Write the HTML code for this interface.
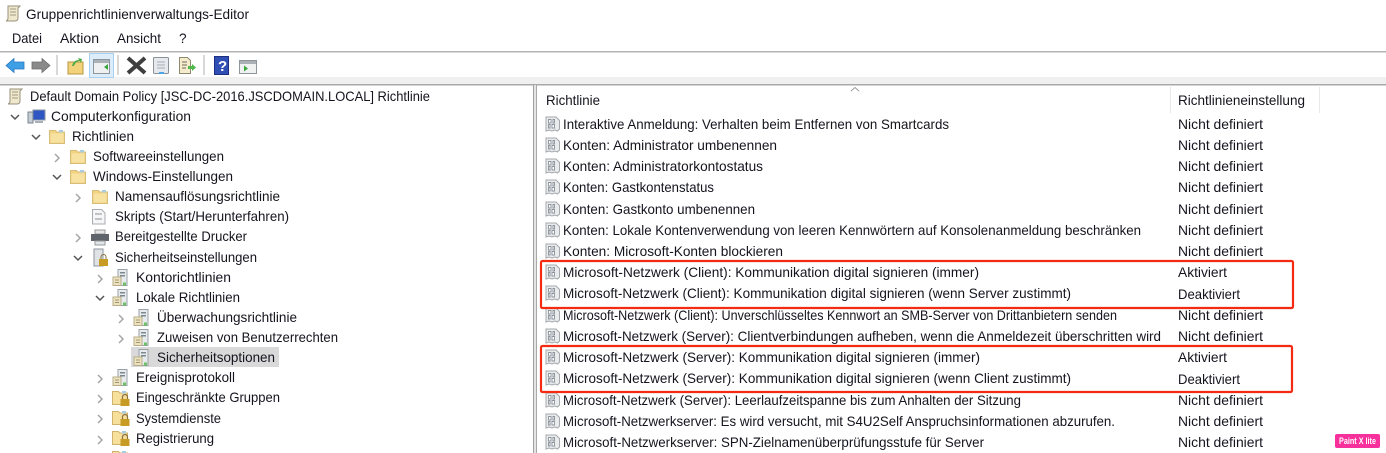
<!DOCTYPE html>
<html><head><meta charset="utf-8"><style>
html,body{margin:0;padding:0;background:#fff;width:1386px;height:453px;overflow:hidden}
svg{display:block;filter:blur(.3px)}
text{font-family:"Liberation Sans",sans-serif;font-size:13.6px;fill:#14141e}
</style></head><body>
<svg width="1386" height="453" viewBox="0 0 1386 453" xmlns="http://www.w3.org/2000/svg">
<defs>
<symbol id="folder" viewBox="0 0 16 16"><path d="M.5 14.500V1.500h6l1.200 1.500h7.800v11.500z" fill="#f1d382" stroke="#d8bd78"/><path d="M1.500 4.500h13v9h-13z" fill="#f8e2a2"/><rect x="10" y="1" width="4" height="2.500" fill="#a8cce0"/></symbol>
<symbol id="lockf" viewBox="0 0 18 16"><path d="M.5 14.500V1.500h6l1.200 1.500h7.800v11.500z" fill="#f6e09c" stroke="#d0b46c"/><rect x="10" y="1" width="4" height="2.500" fill="#a8cce0"/><rect x="8.500" y="9" width="9" height="7" fill="#c89b24"/><path d="M10.500 9V7a2.500 2.500 0 015 0v2" fill="none" stroke="#8a7040" stroke-width="1.200"/></symbol>
<symbol id="srv" viewBox="0 0 16 18"><rect x="6" y=".5" width="9" height="16" fill="#e8ebed" stroke="#9aa2a8"/><rect x="8" y="3" width="5" height="1.500" fill="#7c888f"/><rect x="8" y="6" width="5" height="1.500" fill="#7c888f"/><rect x="11" y="13.500" width="3" height="3" fill="#6cc066"/><path d="M1 8h8v8.500H1z" fill="#ece2c0" stroke="#b8ad88"/><path d="M3 11h4M3 13.500h4" stroke="#a49870"/></symbol>
<symbol id="pol" viewBox="0 0 16 16"><path d="M1 1h10l3.500 3.500v8.500l-2 2-2.500-1-3 1-3-1-3 1z" fill="#e9ebed" stroke="#a4a8ac"/><path d="M3.500 3.500h2.500v3.500H3.500zM8 3.500h1.500v3.500H8zM3.500 8.500H5V12H3.500zM7 8.500h2.500V12H7z" fill="#fff" stroke="#8a929a" stroke-width=".9"/></symbol>
<symbol id="scroll" viewBox="0 0 18 18"><path d="M4 2h12l-2 2v10c0 2-1 3-3 3H2c1.500-.5 2-1.500 2-3z" fill="#f0e8cc" stroke="#98927e"/><path d="M6 5h6M6 8h6M6 11h6" stroke="#a09a84"/></symbol>
<symbol id="cd" viewBox="0 0 10 10"><path d="M1 3l4 4 4-4" fill="none" stroke="#555" stroke-width="1.500"/></symbol>
<symbol id="cr" viewBox="0 0 10 10"><path d="M3 1l4 4-4 4" fill="none" stroke="#a6a6a6" stroke-width="1.500"/></symbol>
</defs>

<rect width="1386" height="453" fill="#fff"/>

<!-- title + menu -->
<use href="#scroll" x="4" y="4" width="18" height="18"/>
<text x="26" y="19" textLength="223" lengthAdjust="spacingAndGlyphs">Gruppenrichtlinienverwaltungs-Editor</text>
<text x="12" y="43" textLength="30" lengthAdjust="spacingAndGlyphs">Datei</text>
<text x="60" y="43" textLength="39" lengthAdjust="spacingAndGlyphs">Aktion</text>
<text x="117" y="43" textLength="44" lengthAdjust="spacingAndGlyphs">Ansicht</text>
<text x="179" y="43">?</text>

<!-- toolbar -->
<rect x="0" y="51" width="1386" height="1.500" fill="#b4b4b4"/>
<rect x="0" y="77" width="1386" height="7" fill="#f0f0f0"/>
<rect x="0" y="84" width="1386" height="1.500" fill="#a8a8a8"/>
<path d="M6 65.500l8-7v3.500h10v7H14v3.500z" fill="#3f9fe6" stroke="#2a78c0" stroke-width=".8"/>
<path d="M50 65.500l-8-7v3.500H32v7h10v3.500z" fill="#8a8a8a" stroke="#6e6e6e" stroke-width=".8"/>
<rect x="56.500" y="55" width="1" height="20" fill="#b0b0b0"/>
<path d="M68 62h15v12H68z" fill="#f3d27c" stroke="#b8973c"/>
<path d="M72 66c1-4 3-6 7-6l-1-2 4 1-1 4-1-2c-3 0-5 2-6 5z" fill="#4eac48"/>
<rect x="89.500" y="53.500" width="24" height="24" fill="#dcecf9" stroke="#a8d0f0"/>
<rect x="93.500" y="59.500" width="16" height="14" fill="#eef0f2" stroke="#8c969c"/>
<rect x="94" y="60" width="15" height="3" fill="#aab2b8"/>
<path d="M108 64l-4 3 4 3z" fill="#3aa63e"/>
<rect x="117.500" y="55" width="1" height="20" fill="#b0b0b0"/>
<path d="M128 58l17 15M145 58l-17 15" stroke="#3f3f3f" stroke-width="4"/>
<rect x="153.500" y="57.500" width="15" height="16" rx="1" fill="#e6eaee" stroke="#8c9298"/>
<path d="M157 62h8M157 65h8M157 68h8" stroke="#a4acb2"/>
<rect x="159" y="72" width="5" height="2" fill="#4aa6e6"/>
<path d="M179.500 57.500h8l3 3v13h-11z" fill="#f4eccc" stroke="#8e8a70"/>
<path d="M182 62h5M182 65h5M182 68h4" stroke="#6e6a58"/>
<path d="M188 66h4v-2l4 3.500-4 3.500v-2h-4z" fill="#4eb848"/>
<rect x="203.500" y="55" width="1" height="20" fill="#b0b0b0"/>
<rect x="214.500" y="56.500" width="14" height="18" fill="#2f4fb4" stroke="#1c2f80"/>
<text x="218" y="71" style="font-size:15px;font-weight:bold;fill:#fff">?</text>
<rect x="239.500" y="60.500" width="17" height="13" fill="#f0f2f2" stroke="#8c969c"/>
<rect x="240" y="61" width="16" height="3" fill="#aab2b8"/>
<path d="M244 65.500l4 3-4 3z" fill="#3aa63e"/>

<!-- panes -->
<rect x="533" y="85" width="3.500" height="368" fill="#e4e4e4"/>
<rect x="533" y="85" width="1" height="368" fill="#a0a0a0"/>
<rect x="536" y="85" width="1" height="368" fill="#a8a8a8"/>

<!-- tree -->
<rect x="131" y="347" width="148" height="20" fill="#d9d9d9"/>
<use href="#scroll" x="6" y="87" width="18" height="18"/>
<text x="30" y="101" textLength="400" lengthAdjust="spacingAndGlyphs">Default Domain Policy [JSC-DC-2016.JSCDOMAIN.LOCAL] Richtlinie</text>
<use href="#cd" x="10" y="112" width="10" height="10"/>
<rect x="33" y="110" width="12" height="10" fill="#2f57c4" stroke="#8a94a0"/><rect x="28" y="112" width="5" height="11" fill="#c4ccd4" stroke="#7a8490"/><rect x="35" y="121" width="8" height="2" fill="#a8b0b8"/>
<text x="51" y="121" textLength="140" lengthAdjust="spacingAndGlyphs">Computerkonfiguration</text>
<use href="#cd" x="31" y="132" width="10" height="10"/>
<use href="#folder" x="49" y="129" width="16" height="16"/>
<text x="72" y="141" textLength="62" lengthAdjust="spacingAndGlyphs">Richtlinien</text>
<use href="#cr" x="52" y="153" width="10" height="10"/>
<use href="#folder" x="70" y="149" width="16" height="16"/>
<text x="93" y="161" textLength="131" lengthAdjust="spacingAndGlyphs">Softwareeinstellungen</text>
<use href="#cd" x="52" y="172" width="10" height="10"/>
<use href="#folder" x="70" y="169" width="16" height="16"/>
<text x="93" y="181" textLength="140" lengthAdjust="spacingAndGlyphs">Windows-Einstellungen</text>
<use href="#cr" x="73" y="193" width="10" height="10"/>
<use href="#folder" x="92" y="189" width="16" height="16"/>
<text x="115" y="201" textLength="165" lengthAdjust="spacingAndGlyphs">Namensauflösungsrichtlinie</text>
<path d="M92.500 209.500h9l3.500 3.500v11H92.500z" fill="#f6f6f8" stroke="#a8acb0"/><path d="M95 214h7M95 219h7" stroke="#8a9098"/>
<text x="115" y="221" textLength="174" lengthAdjust="spacingAndGlyphs">Skripts (Start/Herunterfahren)</text>
<use href="#cr" x="73" y="233" width="10" height="10"/>
<rect x="95" y="230" width="10" height="4" fill="#e4e4e4" stroke="#9a9a9a"/><rect x="91" y="234" width="18" height="7" fill="#5e646a"/><rect x="95" y="241" width="10" height="4" fill="#dfe6ea" stroke="#9a9a9a"/>
<text x="115" y="241" textLength="132" lengthAdjust="spacingAndGlyphs">Bereitgestellte Drucker</text>
<use href="#cd" x="73" y="253" width="10" height="10"/>
<rect x="94" y="249" width="9" height="17" fill="#dfe3e6" stroke="#8c969c"/><rect x="99" y="259" width="9" height="7" fill="#c89b24"/><path d="M101 259v-2a2.500 2.500 0 015 0v2" fill="none" stroke="#8a7040"/>
<text x="115" y="262" textLength="142" lengthAdjust="spacingAndGlyphs">Sicherheitseinstellungen</text>
<use href="#cr" x="95" y="274" width="10" height="10"/>
<use href="#srv" x="112" y="269" width="16" height="18"/>
<text x="136" y="282" textLength="95" lengthAdjust="spacingAndGlyphs">Kontorichtlinien</text>
<use href="#cd" x="95" y="293" width="10" height="10"/>
<use href="#srv" x="112" y="289" width="16" height="18"/>
<text x="136" y="302" textLength="104" lengthAdjust="spacingAndGlyphs">Lokale Richtlinien</text>
<use href="#cr" x="116" y="314" width="10" height="10"/>
<use href="#srv" x="133" y="309" width="16" height="18"/>
<text x="157" y="322" textLength="140" lengthAdjust="spacingAndGlyphs">Überwachungsrichtlinie</text>
<use href="#cr" x="116" y="334" width="10" height="10"/>
<use href="#srv" x="133" y="329" width="16" height="18"/>
<text x="157" y="342" textLength="181" lengthAdjust="spacingAndGlyphs">Zuweisen von Benutzerrechten</text>
<use href="#srv" x="133" y="349" width="16" height="18"/>
<text x="157" y="362" textLength="118" lengthAdjust="spacingAndGlyphs">Sicherheitsoptionen</text>
<use href="#cr" x="95" y="374" width="10" height="10"/>
<use href="#srv" x="112" y="369" width="16" height="18"/>
<text x="136" y="382" textLength="99" lengthAdjust="spacingAndGlyphs">Ereignisprotokoll</text>
<use href="#cr" x="95" y="394" width="10" height="10"/>
<use href="#lockf" x="112" y="390" width="18" height="16"/>
<text x="136" y="402" textLength="144" lengthAdjust="spacingAndGlyphs">Eingeschränkte Gruppen</text>
<use href="#cr" x="95" y="414" width="10" height="10"/>
<use href="#lockf" x="112" y="410" width="18" height="16"/>
<text x="136" y="423" textLength="85" lengthAdjust="spacingAndGlyphs">Systemdienste</text>
<use href="#cr" x="95" y="435" width="10" height="10"/>
<use href="#lockf" x="112" y="430" width="18" height="16"/>
<text x="136" y="443" textLength="78" lengthAdjust="spacingAndGlyphs">Registrierung</text>
<use href="#lockf" x="112" y="450" width="18" height="16"/>

<!-- list header -->
<text x="546" y="105" textLength="54" lengthAdjust="spacingAndGlyphs">Richtlinie</text>
<path d="M851 91l4-3.500 4 3.500" fill="none" stroke="#9a9a9a"/>
<rect x="1170" y="87" width="1" height="26" fill="#e8e8e8"/>
<rect x="1319" y="87" width="1" height="26" fill="#e8e8e8"/>
<text x="1178" y="105" textLength="127" lengthAdjust="spacingAndGlyphs">Richtlinieneinstellung</text>

<!-- rows -->
<use href="#pol" x="545" y="116" width="16" height="16"/>
<text x="563" y="129" textLength="386" lengthAdjust="spacingAndGlyphs">Interaktive Anmeldung: Verhalten beim Entfernen von Smartcards</text>
<text x="1178" y="129" textLength="85" lengthAdjust="spacingAndGlyphs">Nicht definiert</text>
<use href="#pol" x="545" y="137" width="16" height="16"/>
<text x="563" y="150" textLength="214" lengthAdjust="spacingAndGlyphs">Konten: Administrator umbenennen</text>
<text x="1178" y="150" textLength="85" lengthAdjust="spacingAndGlyphs">Nicht definiert</text>
<use href="#pol" x="545" y="158" width="16" height="16"/>
<text x="563" y="171" textLength="200" lengthAdjust="spacingAndGlyphs">Konten: Administratorkontostatus</text>
<text x="1178" y="171" textLength="85" lengthAdjust="spacingAndGlyphs">Nicht definiert</text>
<use href="#pol" x="545" y="179" width="16" height="16"/>
<text x="563" y="192" textLength="151" lengthAdjust="spacingAndGlyphs">Konten: Gastkontenstatus</text>
<text x="1178" y="192" textLength="85" lengthAdjust="spacingAndGlyphs">Nicht definiert</text>
<use href="#pol" x="545" y="201" width="16" height="16"/>
<text x="563" y="214" textLength="192" lengthAdjust="spacingAndGlyphs">Konten: Gastkonto umbenennen</text>
<text x="1178" y="214" textLength="85" lengthAdjust="spacingAndGlyphs">Nicht definiert</text>
<use href="#pol" x="545" y="222" width="16" height="16"/>
<text x="563" y="235" textLength="578" lengthAdjust="spacingAndGlyphs">Konten: Lokale Kontenverwendung von leeren Kennwörtern auf Konsolenanmeldung beschränken</text>
<text x="1178" y="235" textLength="85" lengthAdjust="spacingAndGlyphs">Nicht definiert</text>
<use href="#pol" x="545" y="243" width="16" height="16"/>
<text x="563" y="256" textLength="220" lengthAdjust="spacingAndGlyphs">Konten: Microsoft-Konten blockieren</text>
<text x="1178" y="256" textLength="85" lengthAdjust="spacingAndGlyphs">Nicht definiert</text>
<use href="#pol" x="545" y="264" width="16" height="16"/>
<text x="563" y="277" textLength="416" lengthAdjust="spacingAndGlyphs">Microsoft-Netzwerk (Client): Kommunikation digital signieren (immer)</text>
<text x="1178" y="277" textLength="49" lengthAdjust="spacingAndGlyphs">Aktiviert</text>
<use href="#pol" x="545" y="285" width="16" height="16"/>
<text x="563" y="298" textLength="508" lengthAdjust="spacingAndGlyphs">Microsoft-Netzwerk (Client): Kommunikation digital signieren (wenn Server zustimmt)</text>
<text x="1178" y="299" textLength="62" lengthAdjust="spacingAndGlyphs">Deaktiviert</text>
<use href="#pol" x="545" y="307" width="16" height="16"/>
<text x="563" y="320" textLength="554" lengthAdjust="spacingAndGlyphs">Microsoft-Netzwerk (Client): Unverschlüsseltes Kennwort an SMB-Server von Drittanbietern senden</text>
<text x="1178" y="320" textLength="85" lengthAdjust="spacingAndGlyphs">Nicht definiert</text>
<use href="#pol" x="545" y="328" width="16" height="16"/>
<text x="563" y="341" textLength="598" lengthAdjust="spacingAndGlyphs">Microsoft-Netzwerk (Server): Clientverbindungen aufheben, wenn die Anmeldezeit überschritten wird</text>
<text x="1178" y="341" textLength="85" lengthAdjust="spacingAndGlyphs">Nicht definiert</text>
<use href="#pol" x="545" y="349" width="16" height="16"/>
<text x="563" y="362" textLength="417" lengthAdjust="spacingAndGlyphs">Microsoft-Netzwerk (Server): Kommunikation digital signieren (immer)</text>
<text x="1178" y="362" textLength="49" lengthAdjust="spacingAndGlyphs">Aktiviert</text>
<use href="#pol" x="545" y="370" width="16" height="16"/>
<text x="563" y="383" textLength="508" lengthAdjust="spacingAndGlyphs">Microsoft-Netzwerk (Server): Kommunikation digital signieren (wenn Client zustimmt)</text>
<text x="1178" y="384" textLength="62" lengthAdjust="spacingAndGlyphs">Deaktiviert</text>
<use href="#pol" x="545" y="392" width="16" height="16"/>
<text x="563" y="405" textLength="458" lengthAdjust="spacingAndGlyphs">Microsoft-Netzwerk (Server): Leerlaufzeitspanne bis zum Anhalten der Sitzung</text>
<text x="1178" y="405" textLength="85" lengthAdjust="spacingAndGlyphs">Nicht definiert</text>
<use href="#pol" x="545" y="413" width="16" height="16"/>
<text x="563" y="426" textLength="552" lengthAdjust="spacingAndGlyphs">Microsoft-Netzwerkserver: Es wird versucht, mit S4U2Self Anspruchsinformationen abzurufen.</text>
<text x="1178" y="426" textLength="85" lengthAdjust="spacingAndGlyphs">Nicht definiert</text>
<use href="#pol" x="545" y="434" width="16" height="16"/>
<text x="563" y="447" textLength="421" lengthAdjust="spacingAndGlyphs">Microsoft-Netzwerkserver: SPN-Zielnamenüberprüfungsstufe für Server</text>
<text x="1178" y="447" textLength="85" lengthAdjust="spacingAndGlyphs">Nicht definiert</text>

<!-- red boxes -->
<rect x="541" y="261" width="752" height="47" rx="1.500" fill="none" stroke="#f52a12" stroke-width="2.200"/>
<rect x="541" y="346" width="751" height="46" rx="1.500" fill="none" stroke="#f52a12" stroke-width="2.200"/>

<!-- badge -->
<rect x="1335" y="434" width="45" height="14" rx="2" fill="#f8309c"/>
<text x="1339" y="444" textLength="37" lengthAdjust="spacingAndGlyphs" style="font-size:9px;font-weight:bold;fill:#fff">Paint X lite</text>
</svg>
</body></html>
